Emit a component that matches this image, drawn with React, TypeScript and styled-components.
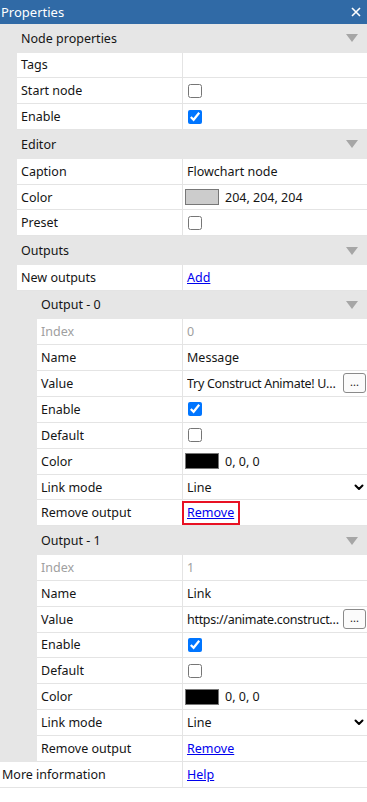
import React from "react";
import styled, { createGlobalStyle } from "styled-components";

const GlobalStyle = createGlobalStyle`
  html, body { margin: 0; padding: 0; background: #ffffff; }
  body {
    font-family: "Noto Sans", "Open Sans", sans-serif;
    font-size: 12.5px;
    color: #151515;
  }
`;

const ROW_H = 25.9;
const HEAD_H = 28.5;

const Panel = styled.div`
  width: 367px;
  display: flex;
  flex-direction: column;
`;

const TitleBar = styled.div`
  height: 24px;
  background: #306aa6;
  color: #ffffff;
  display: flex;
  align-items: center;
  justify-content: space-between;
  padding: 0 5px 0 1px;
  box-sizing: border-box;
  font-size: 13px;
`;

const CloseButton = styled.button`
  border: none;
  background: transparent;
  padding: 0;
  width: 12px;
  height: 12px;
  display: flex;
  align-items: center;
  justify-content: center;
  cursor: pointer;
`;

const SectionHeader = styled.div<{ $indent: number }>`
  height: ${HEAD_H}px;
  background: #e6e6e6;
  display: flex;
  align-items: center;
  justify-content: space-between;
  padding-left: ${(p) => p.$indent + 4}px;
  padding-right: 9px;
  box-sizing: border-box;
  white-space: nowrap;
`;

const SectionBody = styled.div`
  display: flex;
`;

const Gutter = styled.div<{ $w: number }>`
  width: ${(p) => p.$w}px;
  flex: none;
  background: #e6e6e6;
`;

const Rows = styled.div`
  flex: 1;
  min-width: 0;
  display: flex;
  flex-direction: column;
`;

const Row = styled.div`
  height: ${ROW_H}px;
  display: grid;
  grid-template-columns: minmax(0, 1fr) 185px;
  border-bottom: 1px solid #e4e4e4;
  box-sizing: border-box;
  background: #ffffff;
`;

const Label = styled.div<{ $disabled?: boolean; $flush?: boolean }>`
  padding-left: ${(p) => (p.$flush ? 2 : 4)}px;
  display: flex;
  align-items: center;
  color: ${(p) => (p.$disabled ? "#a0a0a0" : "#151515")};
  white-space: nowrap;
  overflow: hidden;
`;

const Value = styled.div<{ $disabled?: boolean }>`
  position: relative;
  border-left: 1px solid #e4e4e4;
  padding-left: 4px;
  display: flex;
  align-items: center;
  min-width: 0;
  color: ${(p) => (p.$disabled ? "#a0a0a0" : "#151515")};
  white-space: nowrap;
`;

const ValueText = styled.span`
  flex: 1;
  min-width: 0;
  overflow: hidden;
  text-overflow: ellipsis;
  white-space: nowrap;
  letter-spacing: -0.3px;
`;

const Check = styled.input`
  width: 14px;
  height: 14px;
  margin: 0 0 0 1px;
`;

const Swatch = styled.span<{ $color: string }>`
  width: 34px;
  height: 16px;
  box-sizing: border-box;
  border: 1px solid #777777;
  background: ${(p) => p.$color};
  margin-left: -2px;
  margin-right: 6px;
  flex: none;
`;

const Link = styled.a`
  color: #0000ee;
  text-decoration: underline;
  cursor: pointer;
`;

const EllipsisButton = styled.button`
  flex: none;
  width: 23px;
  height: 20px;
  margin: 0 1px 0 2px;
  padding: 0 0 4px;
  border: 1px solid #8a8a8a;
  border-radius: 3px;
  background: #fbfbfb;
  font-family: inherit;
  font-size: 11px;
  color: #151515;
  line-height: 1;
`;

const Highlight = styled.span`
  position: absolute;
  left: -1px;
  top: 1px;
  bottom: 0;
  width: 58px;
  box-sizing: border-box;
  border: 2px solid #e81123;
  pointer-events: none;
`;

const SelectValue = styled.div`
  flex: 1;
  display: flex;
  align-items: center;
  justify-content: space-between;
  padding-right: 3px;
`;

const Caret = () => (
  <svg width="12" height="8" viewBox="0 0 12 8">
    <polygon points="0,0 12,0 6,8" fill="#a6a6a6" />
  </svg>
);

const Chevron = () => (
  <svg width="10" height="7" viewBox="0 0 10 7">
    <polyline
      points="1.5,1.5 5,5 8.5,1.5"
      fill="none"
      stroke="#000"
      strokeWidth="2"
      strokeLinecap="round"
      strokeLinejoin="round"
    />
  </svg>
);

const CloseIcon = () => (
  <svg width="10" height="10" viewBox="0 0 10 10">
    <path d="M1 1 L9 9 M9 1 L1 9" stroke="#fff" strokeWidth="1.6" />
  </svg>
);

type SectionProps = {
  title: string;
  indent: number;
  children: React.ReactNode;
};

const Section = ({ title, indent, children }: SectionProps) => (
  <>
    <SectionHeader $indent={indent}>
      <span>{title}</span>
      <Caret />
    </SectionHeader>
    <SectionBody>
      <Gutter $w={indent} />
      <Rows>{children}</Rows>
    </SectionBody>
  </>
);

const Prop = ({
  label,
  disabled,
  flush,
  children,
}: {
  label: string;
  disabled?: boolean;
  flush?: boolean;
  children?: React.ReactNode;
}) => (
  <Row>
    <Label $disabled={disabled} $flush={flush}>
      {label}
    </Label>
    <Value $disabled={disabled}>{children}</Value>
  </Row>
);

const Checkbox = ({ checked }: { checked: boolean }) => (
  <Check type="checkbox" defaultChecked={checked} />
);

const OutputSection = ({
  index,
  name,
  value,
  highlight,
}: {
  index: number;
  name: string;
  value: string;
  highlight?: boolean;
}) => (
  <Section title={`Output - ${index}`} indent={20}>
    <Prop label="Index" disabled>
      {index}
    </Prop>
    <Prop label="Name">{name}</Prop>
    <Prop label="Value">
      <ValueText>{value}</ValueText>
      <EllipsisButton>...</EllipsisButton>
    </Prop>
    <Prop label="Enable">
      <Checkbox checked />
    </Prop>
    <Prop label="Default">
      <Checkbox checked={false} />
    </Prop>
    <Prop label="Color">
      <Swatch $color="#000000" />
      0, 0, 0
    </Prop>
    <Prop label="Link mode">
      <SelectValue>
        <span>Line</span>
        <Chevron />
      </SelectValue>
    </Prop>
    <Prop label="Remove output">
      <Link>Remove</Link>
      {highlight && <Highlight />}
    </Prop>
  </Section>
);

export default function App() {
  return (
    <>
      <GlobalStyle />
      <Panel>
        <TitleBar>
          <span>Properties</span>
          <CloseButton aria-label="Close">
            <CloseIcon />
          </CloseButton>
        </TitleBar>

        <Section title="Node properties" indent={17}>
          <Prop label="Tags" />
          <Prop label="Start node">
            <Checkbox checked={false} />
          </Prop>
          <Prop label="Enable">
            <Checkbox checked />
          </Prop>
        </Section>

        <Section title="Editor" indent={17}>
          <Prop label="Caption">Flowchart node</Prop>
          <Prop label="Color">
            <Swatch $color="#cccccc" />
            204, 204, 204
          </Prop>
          <Prop label="Preset">
            <Checkbox checked={false} />
          </Prop>
        </Section>

        <Section title="Outputs" indent={17}>
          <Prop label="New outputs">
            <Link>Add</Link>
          </Prop>
          <OutputSection
            index={0}
            name="Message"
            value="Try Construct Animate! U…"
            highlight
          />
          <OutputSection
            index={1}
            name="Link"
            value="https://animate.construct…"
          />
        </Section>

        <Prop label="More information" flush>
          <Link>Help</Link>
        </Prop>
      </Panel>
    </>
  );
}
